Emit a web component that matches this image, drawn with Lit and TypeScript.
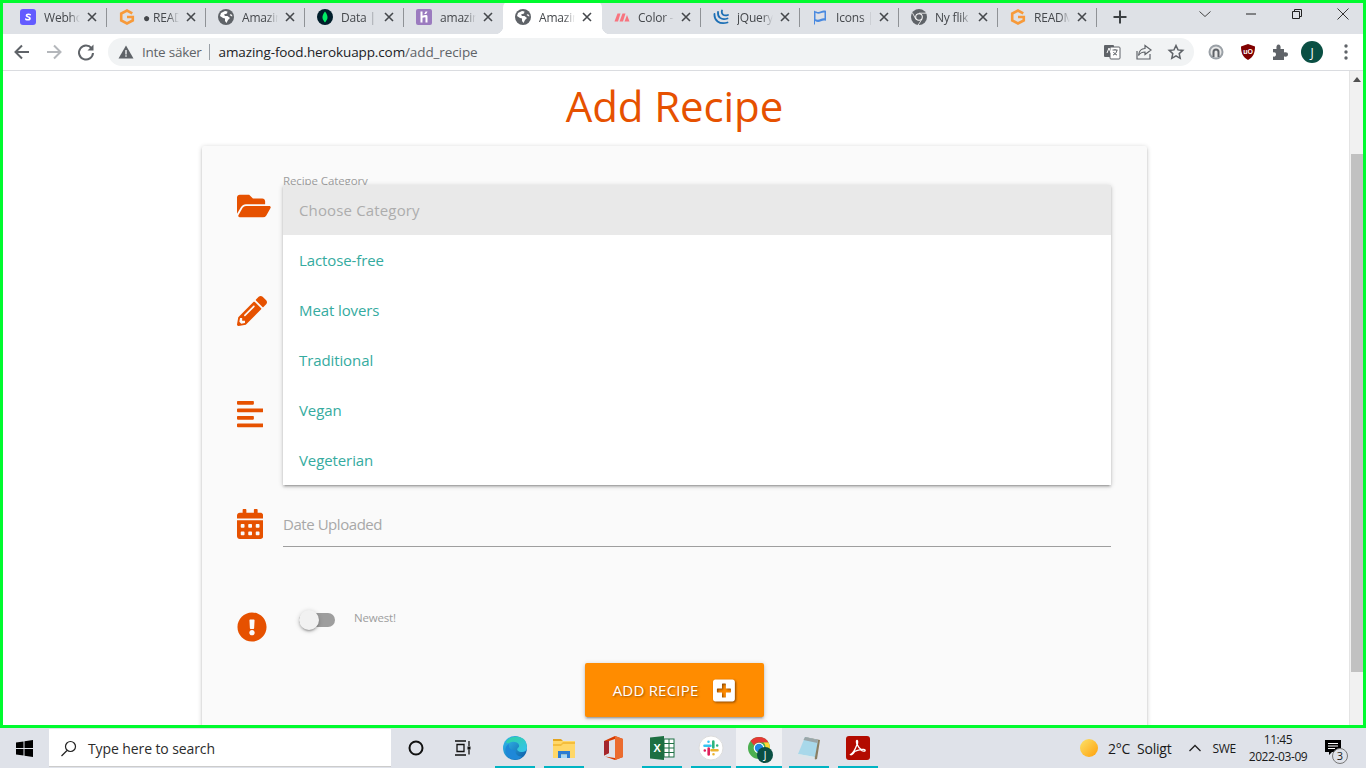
import { LitElement, html, css, svg } from "lit";
import { customElement } from "lit/decorators.js";

const FA = {
  folder: ["0 0 576 512", "M572.694 292.093L500.27 416.248A63.997 63.997 0 0 1 444.989 448H45.025c-18.523 0-30.064-20.093-20.731-36.093l72.424-124.155A64 64 0 0 1 152 256h399.964c18.523 0 30.064 20.093 20.73 36.093zM152 224h328v-48c0-26.51-21.49-48-48-48H272l-64-64H48C21.49 64 0 85.49 0 112v278.046l69.077-118.418C86.214 242.25 117.989 224 152 224z"],
  pencil: ["0 0 512 512", "M497.9 142.1l-46.1 46.1c-4.7 4.7-12.3 4.7-17 0l-111-111c-4.7-4.7-4.7-12.3 0-17l46.1-46.1c18.7-18.7 49.1-18.7 67.9 0l60.1 60.1c18.8 18.7 18.8 49.1 0 67.9zM284.2 99.8L21.6 362.4.4 483.9c-2.9 16.4 11.4 30.6 27.8 27.8l121.5-21.3 262.6-262.6c4.7-4.7 4.7-12.3 0-17l-111-111c-4.8-4.7-12.4-4.7-17.1 0zM124.1 339.9c-5.5-5.5-5.5-14.3 0-19.8l154-154c5.5-5.5 14.3-5.5 19.8 0s5.5 14.3 0 19.8l-154 154c-5.5 5.5-14.3 5.5-19.8 0zM88 424h48v36.3l-64.5 11.3-31.1-31.1L51.7 376H88v48z"],
  align: ["0 0 448 512", "M12.83 352h262.34A12.82 12.82 0 0 0 288 339.17v-38.34A12.82 12.82 0 0 0 275.17 288H12.83A12.82 12.82 0 0 0 0 300.83v38.34A12.82 12.82 0 0 0 12.83 352zm0-256h262.34A12.82 12.82 0 0 0 288 83.17V44.83A12.82 12.82 0 0 0 275.17 32H12.83A12.82 12.82 0 0 0 0 44.83v38.34A12.82 12.82 0 0 0 12.83 96zM432 160H16a16 16 0 0 0-16 16v32a16 16 0 0 0 16 16h416a16 16 0 0 0 16-16v-32a16 16 0 0 0-16-16zm0 256H16a16 16 0 0 0-16 16v32a16 16 0 0 0 16 16h416a16 16 0 0 0 16-16v-32a16 16 0 0 0-16-16z"],
  calendar: ["0 0 448 512", "M0 464c0 26.5 21.5 48 48 48h352c26.5 0 48-21.5 48-48V192H0v272zm320-196c0-6.6 5.4-12 12-12h40c6.6 0 12 5.4 12 12v40c0 6.6-5.4 12-12 12h-40c-6.6 0-12-5.4-12-12v-40zm0 128c0-6.6 5.4-12 12-12h40c6.6 0 12 5.4 12 12v40c0 6.6-5.4 12-12 12h-40c-6.6 0-12-5.4-12-12v-40zM192 268c0-6.6 5.4-12 12-12h40c6.6 0 12 5.4 12 12v40c0 6.6-5.4 12-12 12h-40c-6.6 0-12-5.4-12-12v-40zm0 128c0-6.6 5.4-12 12-12h40c6.6 0 12 5.4 12 12v40c0 6.6-5.4 12-12 12h-40c-6.6 0-12-5.4-12-12v-40zM64 268c0-6.6 5.4-12 12-12h40c6.6 0 12 5.4 12 12v40c0 6.6-5.4 12-12 12H76c-6.6 0-12-5.4-12-12v-40zm0 128c0-6.6 5.4-12 12-12h40c6.6 0 12 5.4 12 12v40c0 6.6-5.4 12-12 12H76c-6.6 0-12-5.4-12-12v-40zM400 64h-48V16c0-8.8-7.2-16-16-16h-32c-8.8 0-16 7.2-16 16v48H160V16c0-8.8-7.2-16-16-16h-32c-8.8 0-16 7.2-16 16v48H48C21.5 64 0 85.5 0 112v48h448v-48c0-26.5-21.5-48-48-48z"],
  exclaim: ["0 0 512 512", "M504 256c0 136.997-111.043 248-248 248S8 392.997 8 256C8 119.083 119.043 8 256 8s248 111.083 248 248zm-248 50c-25.405 0-46 20.595-46 46s20.595 46 46 46 46-20.595 46-46-20.595-46-46-46zm-43.673-165.346l7.418 136c.347 6.364 5.609 11.346 11.982 11.346h48.546c6.373 0 11.635-4.982 11.982-11.346l7.418-136c.375-6.874-5.098-12.654-11.982-12.654h-63.383c-6.884 0-12.356 5.78-11.981 12.654z"],
  plus: ["0 0 448 512", "M400 32H48C21.5 32 0 53.5 0 80v352c0 26.5 21.5 48 48 48h352c26.5 0 48-21.5 48-48V80c0-26.5-21.5-48-48-48zm-32 252c0 6.6-5.4 12-12 12h-92v92c0 6.6-5.4 12-12 12h-56c-6.6 0-12-5.4-12-12v-92H92c-6.6 0-12-5.4-12-12v-56c0-6.6 5.4-12 12-12h92v-92c0-6.6 5.4-12 12-12h56c6.6 0 12 5.4 12 12v92h92c6.6 0 12 5.4 12 12v56z"],
} as const;

const fa = (k: keyof typeof FA) => html`<svg class="fa" viewBox=${FA[k][0]} fill="currentColor"><path d=${FA[k][1]}></path></svg>`;

const ic16 = (body: unknown) => html`<svg class="fav" viewBox="0 0 16 16">${body}</svg>`;
const globe = svg`<circle cx="8" cy="8" r="8" fill="#5f6368"/><path d="M7 2 3 4 2 7l3 2 2 .5V12l1.500 2L10 11l2-2-2.500-2H7L6 5.500 9 4.500 9.500 2.500zM13 5l-1.500 1 2.500 1.500.5-.5z" fill="#fff"/>`;
const gitbook = svg`<path d="M13.300 4.300 8 1.500 2.200 4.500v7L8 14.500l5.800-3V8H8" fill="none" stroke="#f79a3a" stroke-width="2.600"/>`;

interface Tab { t: string; icon: unknown; active?: boolean; }
const tabs: Tab[] = [
  { t: "Webho", icon: ic16(svg`<rect width="16" height="16" rx="3" fill="#635bff"/><path d="M11 5.200C10.200 4.700 9.300 4.500 8.300 4.500 6.800 4.500 5.700 5.200 5.700 6.500c0 2.300 3.300 1.700 3.300 2.800 0 .5-.5.700-1.100.7-.9 0-1.900-.4-2.700-.9v1.900c.8.400 1.800.6 2.700.6 1.600 0 2.900-.7 2.900-2.200 0-2.400-3.400-1.900-3.400-2.900 0-.4.400-.6 1-.6.800 0 1.700.3 2.500.7z" fill="#fff"/>`) },
  { t: "● READ", icon: ic16(gitbook) },
  { t: "Amazin", icon: ic16(globe) },
  { t: "Data |", icon: ic16(svg`<circle cx="8" cy="8" r="8" fill="#001e2b"/><path d="M8 2.500C6 5 5.300 7 5.500 9c.2 1.800 1.500 3 2.500 4.500 1-1.500 2.300-2.700 2.500-4.500C10.700 7 10 5 8 2.500z" fill="#00ed64"/>`) },
  { t: "amazin", icon: ic16(svg`<rect width="16" height="16" rx="2" fill="#9b7bbf"/><path d="M4.500 2.500h2v4.200c1.500-.6 3-.9 4-.6 1 .3 1 1.200 1 2.100v5.300h-2V8.700c0-.8-1.800-.4-3 .1v4.700h-2zM9.500 2.500h2C11.300 3.500 10.700 4.300 10 5H8.200c.6-.7 1.100-1.600 1.300-2.500zM4.500 11l2 1.300-2 1.200z" fill="#fff"/>`) },
  { t: "Amazin", icon: ic16(globe), active: true },
  { t: "Color -", icon: ic16(svg`<path d="M.5 12.500 3.500 4.500h3L4 12.500zM5.500 12.500 8.500 4.500h3L9 12.500zM10.500 12.500 13 6l2.500 6.500z" fill="#f8747f"/>`) },
  { t: "jQuery", icon: ic16(svg`<g fill="none" stroke="#1c6fb5" stroke-width="1.800" stroke-linecap="round"><path d="M1.500 5C1 11 6 16 14.500 13.500"/><path d="M5 3C4.500 8 8 11.500 14.500 9.500"/><path d="M9 1.500C8 5 10.500 7.500 15 6"/></g>`) },
  { t: "Icons |", icon: ic16(svg`<path d="M2 1.500c3 1.800 5 1.800 7 .8s3-1 5-.5v10c-2-.5-3-.5-5 .5s-4 1-6-.2v3.400H2zM3.500 3.800v6.500c2 .8 3.500.5 5-.3s3-1 4-.8V3.600c-1-.1-2.500 0-4 .7s-3.500.3-5-.5z" fill="#4a8ae0"/>`) },
  { t: "Ny flik", icon: ic16(svg`<circle cx="8" cy="8" r="8" fill="#5f6368"/><circle cx="8" cy="8" r="3.800" fill="#fff"/><circle cx="8" cy="8" r="2.800" fill="#5f6368"/><path d="M8 4.200h7.300M5 10.500 1.500 4M11 10 7.200 16" stroke="#fff" stroke-width=".8"/>`) },
  { t: "READM", icon: ic16(gitbook) },
];

const tray = {
  edge: svg`<svg class="tb" viewBox="0 0 24 24"><defs><linearGradient id="e1" x1="0" y1="0" x2="1" y2="1"><stop offset="0" stop-color="#35c1f1"/><stop offset="1" stop-color="#0c59a4"/></linearGradient><linearGradient id="e2" x1="0" y1="0" x2="1" y2="1"><stop offset="0" stop-color="#2ed3a0"/><stop offset="1" stop-color="#35c1f1"/></linearGradient></defs><circle cx="12" cy="12" r="12" fill="url(#e1)"/><path d="M3 6C6 1 13-.5 19 2c4 2 5 6 5 10 0 3-3 4.500-6 4-3-.5-4.500-2-3.500-3.500 1-1.500 2-1.500 1.500-3.500C15 6 10 5 7 6.500 5.500 7.200 4 8 3 6z" fill="url(#e2)"/><path d="M13 14c-1.500 3 1 7 6 6.500-3 3.500-10 4.500-14.500-.5C1 16 2 10 6 8c-1 4 2 7 7 6z" fill="#1e88d8"/></svg>`,
  folder: svg`<svg class="tb" viewBox="0 0 24 24"><path d="M1 3h8l2 2h-10z" fill="#e3a41f"/><rect x="1" y="5" width="22" height="17" fill="#ffd768"/><path d="M1 8h8l2-2h12v2H11L9 10H1z" fill="#f4bd3c"/><path d="M6 15h12v7h-3v-3.500H9V22H6z" fill="#2b7cd3"/><rect x="9" y="18.500" width="6" height="3.500" fill="#a6d8f5"/></svg>`,
  office: svg`<svg class="tb" viewBox="0 0 24 24"><path d="M14 0 22 3v18l-8 3-10-3.500 10 1.500V3L8 5v12l-5 2.500V5z" fill="#d83b01"/><path d="M14 0 22 3v18l-8 3z" fill="#eb6c2f"/><path d="M3 5 8 5v12l-5 2.500z" fill="#a4262c"/></svg>`,
  excel: svg`<svg class="tb" viewBox="0 0 24 24"><rect x="8" y="3" width="16" height="18" fill="#fff" stroke="#1d7044"/><path d="M14 3v18M19 3v18M8 7.500h16M8 12h16M8 16.500h16" stroke="#1d7044" stroke-width="1"/><path d="M0 1.500 14 0v24L0 22.500z" fill="#1d6f42"/><text x="3.500" y="16" font-size="11" font-family="Liberation Sans" font-weight="700" fill="#fff">X</text></svg>`,
  slack: svg`<svg class="tb" viewBox="0 0 24 24"><circle cx="12" cy="12" r="12" fill="#fff" stroke="#ddd"/><g stroke-width="2.600" stroke-linecap="round" fill="none"><path d="M5.500 9.700h6M9.500 5.800h0" stroke="#36c5f0"/><path d="M14.300 5.500v6M18.200 9.500h0" stroke="#2eb67d"/><path d="M18.500 14.300h-6M14.500 18.200h0" stroke="#ecb22e"/><path d="M9.700 18.500v-6M5.800 14.500h0" stroke="#e01e5a"/></g></svg>`,
  chrome: svg`<svg class="tb" viewBox="0 0 24 24"><circle cx="12" cy="12" r="11" fill="#4caf50"/><path d="M12 1a11 11 0 0 1 9.500 5.500H12a5.500 5.500 0 0 0-5 3L3.500 5A11 11 0 0 1 12 1z" fill="#e53935"/><path d="M21.500 6.500A11 11 0 0 1 12 23l5-8.500a5.500 5.500 0 0 0-.5-8z" fill="#fdd835"/><circle cx="12" cy="12" r="5.300" fill="#fff"/><circle cx="12" cy="12" r="4.200" fill="#1e88e5"/><circle cx="18" cy="19" r="8" fill="#0a4f43"/><text x="18" y="23" text-anchor="middle" font-size="10" font-family="Open Sans" fill="#fff">J</text></svg>`,
  pad: svg`<svg class="tb" viewBox="0 0 24 24"><path d="M8 1l15 3-3 19-2 .5-.5-2z" fill="#8a7f63"/><path d="M8 1l13 3-3 17L1 18z" fill="#a8d8ea"/><path d="M8 1l13 3-.6 3L6.500 4z" fill="#9aa6a8"/><path d="M1 18l17 3-1 2L2 20z" fill="#d9e6ea"/></svg>`,
  pdf: svg`<svg class="tb" viewBox="0 0 24 24"><rect width="24" height="24" rx="3" fill="#b30b00"/><path d="M4.500 18.500c2-1 4.500-4.500 6.500-10-.7-2-.8-4 0-4 1 0 .6 3 .2 4 1 2.500 2.500 4 4 5 1.500-.2 4-.2 4 1 0 1.200-3 .6-4.500-.8-2 .3-4 .8-6 1.600-1.500 2.500-3.500 4-4.200 3.200z" fill="none" stroke="#fff" stroke-width="1.300"/></svg>`,
};

@customElement("app-root")
export class AppRoot extends LitElement {
  static styles = css`
    :host { display: block; width: 1366px; height: 768px; overflow: hidden; font-family: "Open Sans", sans-serif; background: #fff; }
    .screen { display: flex; flex-direction: column; width: 1366px; height: 768px; }
    .window { position: relative; height: 728px; display: flex; flex-direction: column; flex: none; }
    .window::after { content: ""; position: absolute; inset: 0; border: 3px solid #00fb2e; pointer-events: none; z-index: 5; }

    .strip { height: 34px; flex: none; background: #dee1e6; display: flex; align-items: stretch; padding-left: 8px; box-sizing: border-box; position: relative; }
    .tab { width: 99px; box-sizing: border-box; position: relative; display: flex; align-items: center; padding: 0 9px 0 12px; color: #45484c; font-size: 12px; letter-spacing: -0.2px; }
    .tab::after { content: ""; position: absolute; right: 0; top: 8px; height: 19px; width: 1px; background: #8f9296; }
    .tab.hide-sep::after, .tab.active::after { display: none; }
    .tab.active { background: #fff; border-radius: 8px 8px 0 0; color: #45484c; }
    .tab.active::before { content: ""; position: absolute; bottom: 0; left: -8px; width: 8px; height: 8px; background: radial-gradient(circle at 0 0, transparent 8px, #fff 8.500px); }
    .flare { position: absolute; bottom: 0; right: -8px; width: 8px; height: 8px; background: radial-gradient(circle at 100% 0, transparent 8px, #fff 8.500px); }
    .fav { width: 16px; height: 16px; flex: none; }
    .ttl { width: 36px; margin-left: 8px; white-space: nowrap; overflow: hidden; flex: none; -webkit-mask-image: linear-gradient(90deg, #000 70%, transparent); mask-image: linear-gradient(90deg, #000 70%, transparent); }
    .x { margin-left: auto; width: 12px; height: 12px; flex: none; }
    .newtab { width: 18px; height: 18px; margin: 8px 0 0 14px; flex: none; }
    .winctl { margin-left: auto; display: flex; height: 28px; }
    .winctl span { width: 46px; display: flex; align-items: center; justify-content: center; }
    .winctl svg { width: 14px; height: 14px; }

    .bar { height: 37px; flex: none; background: #fff; border-bottom: 1px solid #dadce0; box-sizing: border-box; display: flex; align-items: center; padding-left: 12px; }
    .tool { width: 20px; height: 20px; flex: none; }
    .back { margin-right: 12px; } .fwd { margin-right: 12px; }
    .omni { margin-left: 12px; width: 1086px; height: 28px; flex: none; border-radius: 14px; background: #f1f3f4; display: flex; align-items: center; padding-left: 10px; box-sizing: border-box; font-size: 13.500px; color: #5f6368; }
    .omni .warn { width: 16px; height: 16px; margin-right: 8px; flex: none; }
    .omni .sep { width: 1px; height: 16px; background: #9aa0a6; margin: 0 9px 0 7px; flex: none; }
    .inte { letter-spacing: -0.25px; }
    .url { letter-spacing: -0.11px; }
    .url b { font-weight: 400; color: #202124; }
    .omni-end { margin-left: auto; display: flex; gap: 12px; padding-right: 8px; }
    .omni-end svg { width: 20px; height: 20px; display: block; }
    .ext { display: flex; align-items: center; padding-left: 12px; gap: 12px; }
    .ext svg { width: 20px; height: 20px; display: block; }
    .avatar { width: 22px; height: 22px; border-radius: 50%; background: #0a4f43; color: #fff; font-size: 12px; display: flex; align-items: center; justify-content: center; margin: 0 -1px; }
    .ext .dots { width: 16px; margin-left: 4px; }

    .viewport { flex: 1; min-height: 0; display: flex; overflow: hidden; }
    .page { flex: 1; min-width: 0; background: #fff; }
    h1 { margin: 0; padding-top: 3px; height: 71px; box-sizing: border-box; text-align: center; font-weight: 400; font-size: 42px; line-height: 64px; color: #e65100; letter-spacing: -0.1px; }
    .card { width: 945px; margin: 4px auto 0; height: 700px; background: #fafafa; border-radius: 2px; box-shadow: 0 2px 2px 0 rgba(0,0,0,.14), 0 3px 1px -2px rgba(0,0,0,.12), 0 1px 5px 0 rgba(0,0,0,.2); padding: 25px 36px 0 35px; box-sizing: border-box; }
    .row { display: grid; grid-template-columns: 46px 1fr; color: #e65100; }
    .fa { height: 30px; display: block; }
    .r1 { height: 125px; } .r1 .fa { margin-top: 20px; }
    .r2 { height: 103px; }
    .r3 { height: 110px; }
    .r4 { height: 103px; }
    .r5 { height: 51px; }
    .field { position: relative; min-width: 0; }
    .label { font-size: 11.500px; letter-spacing: -0.1px; color: #9e9e9e; line-height: 14px; padding-top: 3px; }
    .dropdown { position: absolute; top: 14px; left: 0; right: 0; background: #fff; box-shadow: 0 2px 2px 0 rgba(0,0,0,.14), 0 3px 1px -2px rgba(0,0,0,.12), 0 1px 5px 0 rgba(0,0,0,.2); z-index: 2; }
    .opt { height: 50px; box-sizing: border-box; padding: 0 16px; display: flex; align-items: center; font-size: 15px; color: #35aba0; letter-spacing: -0.1px; }
    .opt.first { background: #e9e9e9; color: #adadad; letter-spacing: 0.15px; }
    .date { height: 38px; border-bottom: 1px solid #9e9e9e; font-size: 15px; color: #a8a8a8; letter-spacing: -0.45px; display: flex; align-items: flex-end; padding-bottom: 12px; box-sizing: border-box; }
    .switch { display: flex; align-items: center; height: 14px; margin-top: 1px; padding-left: 16px; }
    .track { width: 36px; height: 14px; border-radius: 7px; background: #9e9e9e; position: relative; flex: none; }
    .knob { position: absolute; left: 0; top: -3px; width: 20px; height: 20px; border-radius: 50%; background: #f1f1f1; box-shadow: 0 2px 2px 0 rgba(0,0,0,.14), 0 3px 1px -2px rgba(0,0,0,.12), 0 1px 5px 0 rgba(0,0,0,.2); }
    .sw-label { margin-left: 19px; font-size: 11.500px; letter-spacing: -0.18px; color: #9e9e9e; margin-top: -5px; }
    .actions { display: flex; justify-content: center; }
    .btn { width: 179px; height: 54px; box-sizing: border-box; background: #ff8c00; border: 0; border-radius: 2px; color: #fff; display: flex; align-items: center; justify-content: center; gap: 15px; font: 400 15px "Open Sans", sans-serif; letter-spacing: 0.2px; text-shadow: 1px 1px 2px rgba(120,60,0,.7); box-shadow: 0 2px 2px 0 rgba(0,0,0,.14), 0 3px 1px -2px rgba(0,0,0,.12), 0 1px 5px 0 rgba(0,0,0,.2); padding: 0; }
    .btn svg { height: 25px; display: block; fill: #fff; filter: drop-shadow(1px 1px 1px rgba(120,60,0,.9)); }

    .scroll { width: 17px; flex: none; background: #f1f1f1; border-left: 1px solid #e4e4e4; box-sizing: border-box; position: relative; display: flex; flex-direction: column; align-items: flex-start; }
    .arrow { margin: 6px 0 0 3px; width: 8px; height: 5px; flex: none; }
    .thumb { margin: 72px 0 0 1px; width: 15px; height: 518px; background: #c1c1c1; flex: none; }

    .taskbar { height: 40px; flex: none; background: #dfe2e9; display: flex; align-items: stretch; font-size: 13px; color: #1a1a1a; }
    .start { width: 49px; display: flex; align-items: center; justify-content: center; flex: none; }
    .start svg { width: 17px; height: 17px; }
    .search { width: 342px; flex: none; background: #fff; margin: 1px 0; box-sizing: border-box; display: flex; align-items: center; padding: 1px 0 0 11px; font-size: 14px; letter-spacing: -0.1px; color: #2c2c2c; border-bottom: 1px solid #ccc; }
    .search svg { width: 17px; height: 17px; margin-right: 11px; }
    .cortana { width: 49px; display: flex; align-items: center; justify-content: center; flex: none; }
    .cortana svg { width: 18px; height: 18px; }
    .tasks { width: 45px; display: flex; align-items: center; justify-content: center; flex: none; }
    .tasks svg { width: 18px; height: 18px; }
    .apps { display: flex; margin-left: 10px; flex: none; }
    .app { width: 40px; margin-right: 9px; flex: none; display: flex; align-items: center; justify-content: center; position: relative; padding-bottom: 1px; box-sizing: border-box; }
    .app.on::after { content: ""; position: absolute; left: 0; right: 0; bottom: 0; height: 2px; background: #00b4c3; }
    .app.cur { background: #f0f1f4; width: 46px; margin-left: -4px; margin-right: 7px; }
    .tb { width: 24px; height: 24px; display: block; overflow: visible; }
    .tray { margin-left: auto; margin-right: 12px; display: flex; align-items: center; flex: none; }
    .sun { width: 18px; height: 18px; border-radius: 50%; background: linear-gradient(135deg, #fbe36a, #ff9f0a); margin-right: 10px; }
    .temp { white-space: pre; font-size: 14px; letter-spacing: -0.2px; }
    .caret { width: 14px; height: 10px; margin: 0 11px 0 16px; }
    .lang { font-size: 12px; letter-spacing: -0.3px; }
    .clock { width: 60px; margin-left: 12px; text-align: center; font-size: 12px; line-height: 17px; letter-spacing: -0.4px; white-space: nowrap; margin-top: -1px; }
    .note { width: 40px; position: relative; margin-left: 6px; display: flex; align-items: center; justify-content: center; height: 100%; }
    .note svg { width: 16px; height: 16px; margin-top: -1px; margin-left: -2px; }
    .badge { position: absolute; left: 18px; top: 20px; width: 16px; height: 16px; border-radius: 50%; box-sizing: border-box; border: 1px solid #777; background: #dfe2e9; font-size: 11px; line-height: 14px; text-align: center; }
  `;

  render() {
    const X = html`<svg class="x" viewBox="0 0 12 12"><path d="M2 2l8 8M10 2l-8 8" stroke="#45484c" stroke-width="1.600" fill="none"/></svg>`;
    const cats = ["Lactose-free", "Meat lovers", "Traditional", "Vegan", "Vegeterian"];
    return html`
      <div class="screen">
        <div class="window">
          <div class="strip">
            ${tabs.map((tb, i) => html`
              <div class="tab ${tb.active ? "active" : ""} ${tabs[i + 1]?.active ? "hide-sep" : ""}">
                ${tb.icon}<span class="ttl">${tb.t}</span>${X}
                ${tb.active ? html`<i class="flare"></i>` : ""}
              </div>`)}
            <svg class="newtab" viewBox="0 0 18 18"><path d="M9 2.500v13M2.500 9h13" stroke="#3c4043" stroke-width="2" fill="none"/></svg>
            <div class="winctl">
              <span><svg viewBox="0 0 14 14"><path d="M1.500 4.500 7 9.500l5.500-5" stroke="#444" fill="none"/></svg></span>
              <span><svg viewBox="0 0 14 14"><path d="M2 7h10" stroke="#222" fill="none"/></svg></span>
              <span><svg viewBox="0 0 14 14"><path d="M2.500 4.500h7v7h-7zM4.500 4.500v-2h7v7h-2" stroke="#222" fill="none"/></svg></span>
              <span><svg viewBox="0 0 14 14"><path d="M1.500 1.500l11 11M12.500 1.500l-11 11" stroke="#333" fill="none"/></svg></span>
            </div>
          </div>
          <div class="bar">
            <svg class="tool back" viewBox="0 0 20 20"><path d="M17 10H4M10 3.500 3.500 10l6.500 6.500" stroke="#5f6368" stroke-width="2" fill="none"/></svg>
            <svg class="tool fwd" viewBox="0 0 20 20"><path d="M3 10h13M10 3.500l6.500 6.500-6.500 6.500" stroke="#b4b7bb" stroke-width="2" fill="none"/></svg>
            <svg class="tool" viewBox="0 0 20 20"><path d="M15.500 6.200A7 7 0 1 0 17 11" stroke="#5f6368" stroke-width="2" fill="none"/><path d="M17.500 2.500v6h-6z" fill="#5f6368"/></svg>
            <div class="omni">
              <svg class="warn" viewBox="0 0 16 16"><path d="M8 1.500 15.500 14.500H.5z" fill="#5f6368"/><path d="M7.300 6h1.400v4.500H7.300zM7.300 11.300h1.400v1.400H7.300z" fill="#f1f3f4"/></svg>
              <span class="inte">Inte säker</span><i class="sep"></i>
              <span class="url"><b>amazing-food.herokuapp.com</b>/add_recipe</span>
              <div class="omni-end">
                <svg viewBox="0 0 20 20"><rect x="2" y="3" width="10" height="12" rx="1" fill="#5f6368"/><rect x="8" y="5" width="10" height="12" rx="1" fill="#fff" stroke="#5f6368"/><path d="M5 11l2-5 2 5" stroke="#fff" fill="none"/><path d="M10.500 8h5M13 7v1M15 8c-.5 3-2 4.500-4 5M11.500 10c.7 1.500 2 2.500 3.500 3" stroke="#5f6368" fill="none"/></svg>
                <svg viewBox="0 0 20 20"><path d="M3 9v8h13v-5M11 3.500l6 4.500-6 4.500V10C8 10 6 11 4.500 13.500 5 9 7.500 6.500 11 6.500z" stroke="#5f6368" stroke-width="1.200" fill="none"/></svg>
                <svg viewBox="0 0 20 20"><path d="M10 3.500l2 4.400 4.800.5-3.600 3.200 1 4.700L10 13.900l-4.200 2.400 1-4.700-3.600-3.200 4.800-.5z" stroke="#5f6368" stroke-width="1.500" fill="none"/></svg>
              </div>
            </div>
            <div class="ext">
              <svg viewBox="0 0 20 20"><circle cx="10" cy="10" r="7.500" fill="#9aa0a6"/><circle cx="10" cy="10" r="5.500" fill="#e8e8e8"/><path d="M6.500 15v-5a3.500 3.500 0 0 1 7 0v5h-2v-5a1.500 1.500 0 0 0-3 0v5z" fill="#5f6368"/></svg>
              <svg viewBox="0 0 20 20"><path d="M10 2l7 2.500c0 6-1.500 10.500-7 13.500C4.500 15 3 10.500 3 4.500z" fill="#800000"/><text x="10" y="12" text-anchor="middle" font-size="7" font-family="Liberation Sans" font-weight="700" fill="#fff">uO</text></svg>
              <svg viewBox="0 0 20 20"><path d="M3 7h3.500C6 4 7 2.500 8.500 2.500S11 4 10.500 7H14v3.500c3-.5 4 .5 4 2s-1 2.500-4 2V18H3v-3.500c2 .5 3-.5 3-2s-1-2.500-3-2z" fill="#5f6368"/></svg>
              <div class="avatar">J</div>
              <svg class="dots" viewBox="0 0 16 20"><circle cx="8" cy="4" r="1.700" fill="#5f6368"/><circle cx="8" cy="10" r="1.700" fill="#5f6368"/><circle cx="8" cy="16" r="1.700" fill="#5f6368"/></svg>
            </div>
          </div>
          <div class="viewport">
            <div class="page">
              <h1>Add Recipe</h1>
              <div class="card">
                <div class="row r1">
                  ${fa("folder")}
                  <div class="field">
                    <div class="label">Recipe Category</div>
                    <div class="dropdown">
                      <div class="opt first">Choose Category</div>
                      ${cats.map((c) => html`<div class="opt">${c}</div>`)}
                    </div>
                  </div>
                </div>
                <div class="row r2">${fa("pencil")}<div></div></div>
                <div class="row r3">${fa("align")}<div></div></div>
                <div class="row r4">${fa("calendar")}<div class="field"><div class="date">Date Uploaded</div></div></div>
                <div class="row r5">${fa("exclaim")}
                  <div class="switch"><div class="track"><div class="knob"></div></div><span class="sw-label">Newest!</span></div>
                </div>
                <div class="actions"><button class="btn">ADD RECIPE ${fa("plus")}</button></div>
              </div>
            </div>
            <div class="scroll">
              <svg class="arrow" viewBox="0 0 8 5"><path d="M4 0l4 5H0z" fill="#505050"/></svg>
              <div class="thumb"></div>
            </div>
          </div>
        </div>
        <div class="taskbar">
          <div class="start"><svg viewBox="0 0 17 17"><path d="M0 2.500 7.500 1.400v6.600H0zM8.500 1.300 17 0v8H8.500zM0 9h7.500v6.600L0 14.500zM8.500 9H17v8l-8.500-1.300z" fill="#000"/></svg></div>
          <div class="search"><svg viewBox="0 0 17 17"><circle cx="10.500" cy="6.500" r="5" stroke="#222" fill="none" stroke-width="1.200"/><path d="M7 10.500 1.500 16" stroke="#222" stroke-width="1.200"/></svg>Type here to search</div>
          <div class="cortana"><svg viewBox="0 0 18 18"><circle cx="9" cy="9" r="6.500" stroke="#111" stroke-width="2" fill="none"/></svg></div>
          <div class="tasks"><svg viewBox="0 0 18 18"><path d="M1 2h11M3 5.500h7v7H3zM1 16h11M15 2v5M15 10.500v5" stroke="#111" stroke-width="1.300" fill="none"/><rect x="13.500" y="7.500" width="3" height="3" fill="#111"/></svg></div>
          <div class="apps">
            <div class="app on">${tray.edge}</div>
            <div class="app on">${tray.folder}</div>
            <div class="app">${tray.office}</div>
            <div class="app on">${tray.excel}</div>
            <div class="app on">${tray.slack}</div>
            <div class="app on cur">${tray.chrome}</div>
            <div class="app on">${tray.pad}</div>
            <div class="app on">${tray.pdf}</div>
          </div>
          <div class="tray">
            <div class="sun"></div>
            <span class="temp">2°C  Soligt</span>
            <svg class="caret" viewBox="0 0 14 10"><path d="M1.500 8 7 2.500 12.500 8" stroke="#222" stroke-width="1.300" fill="none"/></svg>
            <span class="lang">SWE</span>
            <div class="clock">11:45<br>2022-03-09</div>
            <div class="note"><svg viewBox="0 0 16 16"><path d="M0 0h16v12H7l-3 3v-3H0z" fill="#000"/><path d="M3 3.500h10M3 6h10M3 8.500h7" stroke="#fff"/></svg><div class="badge">3</div></div>
          </div>
        </div>
      </div>
    `;
  }
}
